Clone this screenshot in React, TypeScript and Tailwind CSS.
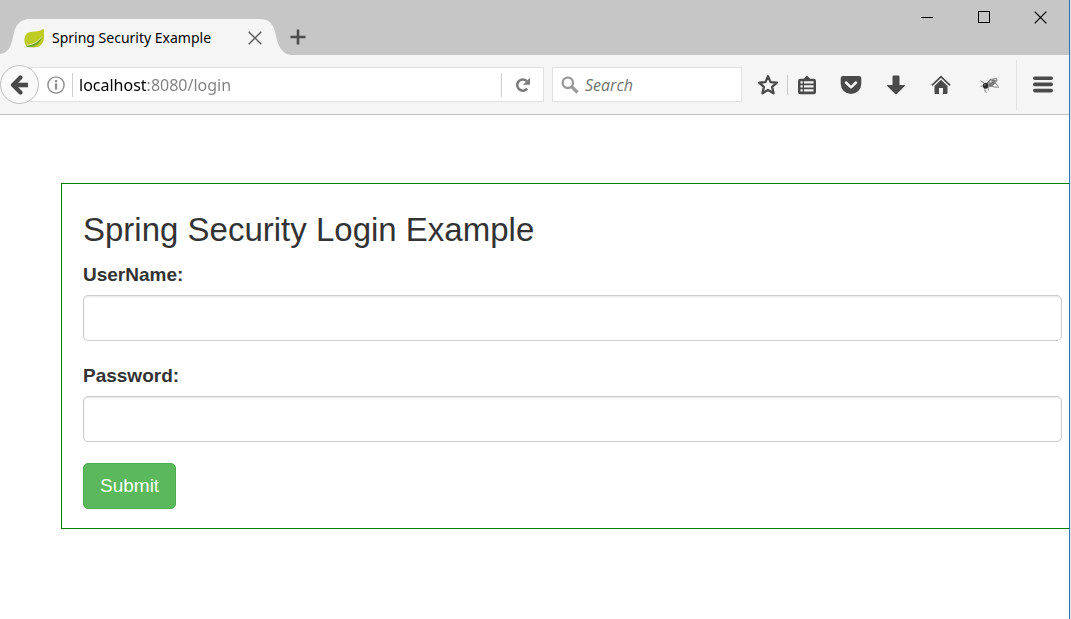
import { useState } from 'react'
import type { ReactNode } from 'react'

type IconProps = { className?: string }

function LeafIcon() {
  return (
    <svg viewBox="0 0 20 20" className="size-5 shrink-0" aria-hidden="true">
      <path d="M19.3 0.5C21 7 20.500 13.500 17 17C13 20.500 6.500 19.500 2.500 18.500C-0.500 15-0.500 8.500 3 5.500C7 2.500 15 5 19.300 0.500Z" fill="#becb22" />
      <path d="M2.500 17.300C9 17.300 14 14.500 17.800 8.500C17.300 14 12 19.300 5 19.200C3.500 19.200 2.200 18.500 2.500 17.300Z" fill="#6fa51f" />
      <path d="M3 17.200C9 16.500 14 14 17.800 8.500" fill="none" stroke="#eef2c0" strokeWidth="0.8" />
    </svg>
  )
}

function CloseIcon({ className }: IconProps) {
  return (
    <svg viewBox="0 0 14 14" className={className} fill="none" stroke="currentColor" strokeWidth="1.4" aria-hidden="true">
      <path d="M0.700 0.700L13.300 13.300M13.300 0.700L0.700 13.300" />
    </svg>
  )
}

function PlusIcon() {
  return (
    <svg viewBox="0 0 16 16" className="size-4" fill="#4d4d4d" aria-hidden="true">
      <path d="M6.700 0.500h2.600v6.200h6.200v2.600h-6.200v6.200h-2.600v-6.200h-6.200v-2.600h6.200z" />
    </svg>
  )
}

function BackIcon() {
  return (
    <svg viewBox="0 0 19 20" className="h-5 w-[19px]" fill="none" stroke="#4a4a4a" aria-hidden="true">
      <path d="M10.500 2.500L3 10l7.500 7.500" strokeWidth="4.200" strokeLinejoin="round" strokeLinecap="round" />
      <path d="M3 10h15" strokeWidth="4.600" />
    </svg>
  )
}

function InfoIcon() {
  return (
    <svg viewBox="0 0 18 18" className="size-[18px] shrink-0" aria-hidden="true">
      <circle cx="9" cy="9" r="8.100" fill="none" stroke="#8c8c8c" strokeWidth="1.400" />
      <path d="M8 7.500h2.200v6h-2.200zM8 4h2.200v2.200h-2.200z" fill="#8c8c8c" />
    </svg>
  )
}

function ReloadIcon() {
  return (
    <svg viewBox="0 0 16 16" className="size-4" aria-hidden="true">
      <path d="M11.900 4.200A5.600 5.600 0 1 0 12.200 11.600" fill="none" stroke="#7d7d7d" strokeWidth="2.500" />
      <path d="M15 0.800v7h-7z" fill="#7d7d7d" />
    </svg>
  )
}

function SearchIcon() {
  return (
    <svg viewBox="0 0 18 18" className="size-[18px] shrink-0" fill="none" stroke="#999" aria-hidden="true">
      <circle cx="6.800" cy="6.800" r="5.200" strokeWidth="2.300" />
      <path d="M10.700 10.700l5.800 5.800" strokeWidth="3.200" />
    </svg>
  )
}

function StarIcon() {
  return (
    <svg viewBox="0 0 22 22" className="size-[22px]" fill="none" stroke="#4a4a4a" strokeWidth="2.300" strokeLinejoin="round" aria-hidden="true">
      <path d="M11 2.300l2.600 5.800 6.200 0.600-4.700 4.100 1.400 6.500-5.500-3.400-5.500 3.400 1.400-6.500-4.700-4.100 6.200-0.600z" />
    </svg>
  )
}

function LibraryIcon() {
  return (
    <svg viewBox="0 0 20 20" className="size-5" aria-hidden="true">
      <path d="M10 0.500l3.200 3.200h3.600a2.200 2.200 0 0 1 2.200 2.200v11.100a2.200 2.200 0 0 1-2.200 2.200h-13.600a2.200 2.200 0 0 1-2.200-2.200v-11.100a2.200 2.200 0 0 1 2.200-2.200h3.600z" fill="#4a4a4a" />
      <path d="M3.500 6.300h2.200v2.200h-2.200zM7 6.300h9.500v2.200h-9.500zM3.500 10.300h2.200v2.200h-2.200zM7 10.300h9.500v2.200h-9.500zM3.500 14.300h2.200v2.200h-2.200zM7 14.300h9.500v2.200h-9.500z" fill="#f5f5f5" />
    </svg>
  )
}

function PocketIcon() {
  return (
    <svg viewBox="0 0 22 20" className="h-5 w-[22px]" aria-hidden="true">
      <path d="M3 1h16a2.300 2.300 0 0 1 2.300 2.300v5.500a10.300 10.300 0 0 1-20.600 0v-5.500a2.300 2.300 0 0 1 2.300-2.300z" fill="#4a4a4a" />
      <path d="M6 7.500l5 4.800 5-4.800" fill="none" stroke="#f5f5f5" strokeWidth="2.500" strokeLinecap="round" strokeLinejoin="round" />
    </svg>
  )
}

function DownloadIcon() {
  return (
    <svg viewBox="0 0 20 20" className="size-5" fill="#4a4a4a" aria-hidden="true">
      <path d="M6.500 1.500a1 1 0 0 1 1-1h5a1 1 0 0 1 1 1v8.500h4.800q1.200 0.200 0.300 1.200l-7.800 7.700q-0.800 0.700-1.600 0l-7.800-7.700q-0.900-1 0.300-1.200h4.800z" />
    </svg>
  )
}

function HomeIcon() {
  return (
    <svg viewBox="0 0 20 20" className="size-5" aria-hidden="true">
      <path d="M1 10.300L10 1.700l9 8.600" fill="none" stroke="#4a4a4a" strokeWidth="1.800" />
      <path d="M10 4.800l6.500 6.200v7a1 1 0 0 1-1 1h-3.500v-6h-4v6h-3.500a1 1 0 0 1-1-1v-7z" fill="#4a4a4a" />
    </svg>
  )
}

function FireflyIcon() {
  return (
    <svg viewBox="0 0 20 16" className="h-4 w-5" aria-hidden="true">
      <path d="M5 8L10 2l7-1.200 0.500 3.200-5.500 5.500-5 1.500z" fill="#8f8f8f" />
      <path d="M9 3.500l4-1.200-2.500 4zM13 3l3.500-1.500-1.500 4.200z" fill="#d9d9d9" />
      <ellipse cx="5.500" cy="8.800" rx="2.600" ry="3" fill="#292929" />
      <path d="M4 6L0.800 3.800M3.300 8.800L0.500 9.200M5 11v3.500l1.500 1M7.800 10l0.700 3.500M10 8.500l4 1.500 5 0.200M12.500 8l2.500-2 3.500 3M7 6l3-3 5 0.500M9 8l7-4.500" fill="none" stroke="#4f4f4f" strokeWidth="0.700" />
      <circle cx="4.800" cy="7.700" r="0.800" fill="#9a9a9a" />
    </svg>
  )
}

function MenuIcon() {
  return (
    <svg viewBox="0 0 20 18" className="h-[18px] w-5" fill="none" stroke="#4a4a4a" strokeWidth="3.600" strokeLinecap="round" aria-hidden="true">
      <path d="M1.800 2.200h16.400M1.800 8.400h16.400M1.800 14.600h16.400" />
    </svg>
  )
}

function TabBar() {
  return (
    <div className="flex h-[55px] items-start justify-between bg-[#c6c6c6]">
      <div className="relative flex h-full w-[290px] items-end">
        <svg viewBox="0 0 290 36" className="absolute bottom-0 left-0 h-9 w-[290px]" fill="#f5f5f5" aria-hidden="true">
          <path d="M0 36v-1C8 34 11 28 13 18C15 6 20 0 30 0H260C270 0 274 6 276 17C278 28 283 36 292 36Z" />
        </svg>
        <div className="relative flex h-[35px] w-full items-center pr-7 pl-6">
          <LeafIcon />
          <span className="ml-2 flex-1 font-['Noto_Sans',sans-serif] text-sm whitespace-nowrap text-black">Spring Security Example</span>
          <button type="button" aria-label="Close tab" className="text-[#5a5a5a]">
            <CloseIcon className="size-[14px]" />
          </button>
        </div>
      </div>
      <button type="button" aria-label="New tab" className="flex h-9 w-4 items-center justify-center self-end">
        <PlusIcon />
      </button>
      <div className="ml-auto flex h-[34px] items-center text-black">
        <button type="button" aria-label="Minimize" className="flex w-[57px] justify-center">
          <span className="h-px w-3 bg-black" />
        </button>
        <button type="button" aria-label="Maximize" className="flex w-[57px] justify-center">
          <span className="size-3 border border-black" />
        </button>
        <button type="button" aria-label="Close window" className="flex w-[57px] justify-center">
          <CloseIcon className="size-[13px]" />
        </button>
      </div>
    </div>
  )
}

function ToolButton({ label, className, children }: { label: string; className: string; children: ReactNode }) {
  return (
    <button type="button" aria-label={label} className={`flex h-full shrink-0 items-center justify-center ${className}`}>
      {children}
    </button>
  )
}

function NavBar() {
  const [address, setAddress] = useState('localhost:8080/login')

  return (
    <div className="flex h-[60px] items-center border-b border-[#bfbfbf] bg-[#f5f5f5]">
      <button
        type="button"
        aria-label="Back"
        className="relative z-10 flex size-[39px] shrink-0 items-center justify-center rounded-full border border-[#c2c2c2] bg-[#f9f9f9]"
      >
        <BackIcon />
      </button>
      <div className="-ml-3 flex h-[35px] min-w-0 flex-1 items-center border border-[#e0e0e0] bg-white pl-[19px]">
        <InfoIcon />
        <span className="mr-1.5 ml-[7px] h-6 w-px bg-[#cfcfcf]" />
        {/* host in black, port and path in grey */}
        <input
          type="text"
          aria-label="Address"
          value={address}
          onChange={e => setAddress(e.target.value)}
          className="min-w-0 flex-1 bg-[linear-gradient(to_right,#000_68px,#808080_68px)] bg-clip-text font-['Noto_Sans',sans-serif] text-base text-transparent caret-black outline-none"
        />
        <span className="h-6 w-px bg-[#cfcfcf]" />
        <button type="button" aria-label="Reload" className="flex w-[41px] justify-center">
          <ReloadIcon />
        </button>
      </div>
      <div className="ml-2 flex h-[35px] w-[190px] shrink-0 items-center gap-1.5 border border-[#e0e0e0] bg-white pl-2">
        <SearchIcon />
        <input
          type="search"
          aria-label="Search"
          placeholder="Search"
          className="min-w-0 flex-1 font-['Open_Sans',sans-serif] text-base text-black italic outline-none placeholder:text-[#737373]"
        />
      </div>
      <ToolButton label="Bookmark this page" className="w-[45px] pl-1.5">
        <StarIcon />
      </ToolButton>
      <span className="h-5 w-px shrink-0 bg-[#c9c9c9]" />
      <ToolButton label="Bookmarks" className="w-10 pr-0.5">
        <LibraryIcon />
      </ToolButton>
      <ToolButton label="Pocket" className="w-[45px]">
        <PocketIcon />
      </ToolButton>
      <ToolButton label="Downloads" className="w-[45px]">
        <DownloadIcon />
      </ToolButton>
      <ToolButton label="Home" className="w-[45px]">
        <HomeIcon />
      </ToolButton>
      <ToolButton label="Firebug" className="w-[53px]">
        <FireflyIcon />
      </ToolButton>
      <span className="h-[50px] w-px shrink-0 bg-[#e2e2e2]" />
      <ToolButton label="Menu" className="w-[52px]">
        <MenuIcon />
      </ToolButton>
    </div>
  )
}

type FieldProps = {
  id: string
  label: string
  type: 'text' | 'password'
}

function Field({ id, label, type }: FieldProps) {
  return (
    <div className="mb-[21px]">
      <label htmlFor={id} className="mb-[7px] block text-[19px] leading-[27px] font-bold">
        {label}
      </label>
      <input
        id={id}
        type={type}
        className="block h-[46px] w-full rounded-[5px] border border-[#ccc] bg-white px-4 text-[19px] shadow-[inset_0_1px_2px_rgba(0,0,0,0.1)] outline-none focus:border-[#66afe9]"
      />
    </div>
  )
}

function LoginForm() {
  return (
    <form
      onSubmit={e => e.preventDefault()}
      className="mt-[68px] ml-[61px] border border-r-0 border-[#008000] pt-7 pr-[7px] pb-[19px] pl-[21px] font-['Liberation_Sans',sans-serif] text-[#333]"
    >
      <h1 className="mb-[13px] text-[33px] leading-9 font-normal">Spring Security Login Example</h1>
      <Field id="username" label="UserName:" type="text" />
      <Field id="password" label="Password:" type="password" />
      <button type="submit" className="block h-[46px] rounded-[5px] border border-[#4cae4c] bg-[#5cb85c] px-4 text-[19px] text-white">
        Submit
      </button>
    </form>
  )
}

export default function App() {
  return (
    <div className="min-h-screen bg-[#e0e0e0] pr-px">
      <div className="min-h-screen border-r border-[#2a7ac0] bg-white">
        <TabBar />
        <NavBar />
        <LoginForm />
      </div>
    </div>
  )
}
